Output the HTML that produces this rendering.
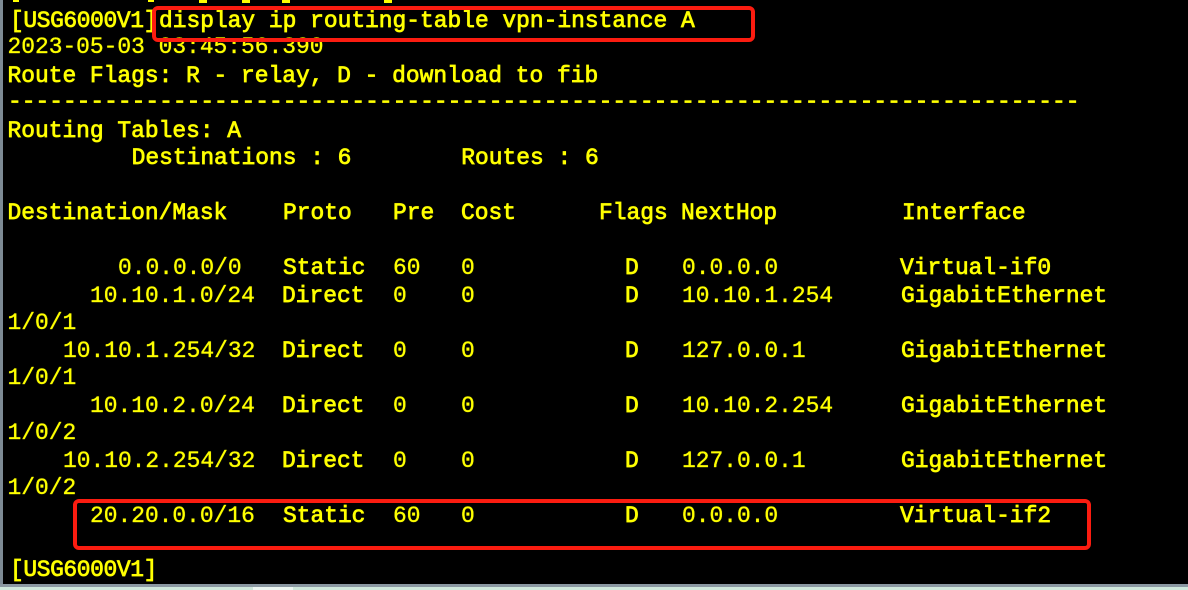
<!DOCTYPE html>
<html><head><meta charset="utf-8">
<style>
html,body{margin:0;padding:0;background:#000}
#r{position:relative;width:1188px;height:590px;background:#000;overflow:hidden;font-family:"Liberation Mono",monospace;font-size:22.9px;font-weight:normal;color:#ff0}
#r span{position:absolute;white-space:pre;line-height:28px;height:28px;text-shadow:0 0 1px #6f8000;-webkit-text-stroke:.7px #ff0}
#r span.n{-webkit-text-stroke:.25px #ff0}
.b{position:absolute;box-sizing:border-box;border:4px solid #fb1c10;border-radius:6px}
.t{position:absolute;background:#ff0;height:3px}
</style></head><body><div id="r">
<div style="position:absolute;left:0;top:0;width:3px;height:590px;background:#7d8a94"></div>
<div style="position:absolute;left:0;top:584px;width:1188px;height:3px;background:#8b98a2"></div>
<div style="position:absolute;left:0;top:587px;width:1188px;height:3px;background:#cfe8dc"></div>
<div style="position:absolute;left:253px;top:587px;width:40px;height:3px;background:#eef8f3"></div>
<div class="t" style="left:13px;top:0;width:6px;height:2px"></div>
<div class="t" style="left:148px;top:0;width:6px;height:2px"></div>
<div class="t" style="left:199px;top:0;width:8px"></div>
<div class="t" style="left:242px;top:0;width:8px"></div>
<div class="t" style="left:282px;top:0;width:8px"></div>
<div class="t" style="left:384px;top:0;width:8px"></div>

<span style="left:10px;top:7px;letter-spacing:-.38px">[USG6000V1]</span><span style="left:159px;top:7px">display ip routing-table vpn-instance A</span>
<span class="n" style="left:7.5px;top:33px">2023-05-03 03:45:56.390</span>
<span style="left:7.5px;top:62px">Route Flags: R - relay, D - download to fib</span>
<span style="left:8px;top:88px">------------------------------------------------------------------------------</span>
<span style="left:7.5px;top:117px">Routing Tables: A</span>
<span style="left:8px;top:144px">         Destinations : 6        Routes : 6</span>
<span style="left:7.5px;top:199px">Destination/Mask</span><span style="left:283px;top:199px">Proto</span><span style="left:393px;top:199px">Pre</span><span style="left:461px;top:199px">Cost</span><span style="left:599px;top:199px">Flags</span><span style="left:681px;top:199px">NextHop</span><span style="left:902px;top:199px">Interface</span>

<span class="n" style="left:118px;top:254px">0.0.0.0/0</span><span style="left:283px;top:254px">Static</span><span class="n" style="left:393px;top:254px">60</span><span class="n" style="left:461px;top:254px">0</span><span style="left:625px;top:254px">D</span><span class="n" style="left:682px;top:254px">0.0.0.0</span><span style="left:900px;top:254px">Virtual-if0</span>

<span class="n" style="left:90px;top:282px">10.10.1.0/24</span><span style="left:282px;top:282px">Direct</span><span class="n" style="left:393px;top:282px">0</span><span class="n" style="left:461px;top:282px">0</span><span style="left:625px;top:282px">D</span><span class="n" style="left:682px;top:282px">10.10.1.254</span><span style="left:901px;top:282px">GigabitEthernet</span>
<span class="n" style="left:7.5px;top:309px">1/0/1</span>

<span class="n" style="left:63px;top:337px">10.10.1.254/32</span><span style="left:282px;top:337px">Direct</span><span class="n" style="left:393px;top:337px">0</span><span class="n" style="left:461px;top:337px">0</span><span style="left:625px;top:337px">D</span><span class="n" style="left:682px;top:337px">127.0.0.1</span><span style="left:901px;top:337px">GigabitEthernet</span>
<span class="n" style="left:7.5px;top:364px">1/0/1</span>

<span class="n" style="left:90px;top:392px">10.10.2.0/24</span><span style="left:282px;top:392px">Direct</span><span class="n" style="left:393px;top:392px">0</span><span class="n" style="left:461px;top:392px">0</span><span style="left:625px;top:392px">D</span><span class="n" style="left:682px;top:392px">10.10.2.254</span><span style="left:901px;top:392px">GigabitEthernet</span>
<span class="n" style="left:7.5px;top:419px">1/0/2</span>

<span class="n" style="left:63px;top:447px">10.10.2.254/32</span><span style="left:282px;top:447px">Direct</span><span class="n" style="left:393px;top:447px">0</span><span class="n" style="left:461px;top:447px">0</span><span style="left:625px;top:447px">D</span><span class="n" style="left:682px;top:447px">127.0.0.1</span><span style="left:901px;top:447px">GigabitEthernet</span>
<span class="n" style="left:7.5px;top:474px">1/0/2</span>

<span class="n" style="left:90px;top:502px">20.20.0.0/16</span><span style="left:283px;top:502px">Static</span><span class="n" style="left:393px;top:502px">60</span><span class="n" style="left:461px;top:502px">0</span><span style="left:625px;top:502px">D</span><span class="n" style="left:682px;top:502px">0.0.0.0</span><span style="left:900px;top:502px">Virtual-if2</span>

<span style="left:10px;top:556px;letter-spacing:-.38px">[USG6000V1]</span>

<div class="b" style="left:152px;top:6px;width:603px;height:36px"></div>
<div class="b" style="left:73px;top:499px;width:1018px;height:51px"></div>
</div></body></html>
